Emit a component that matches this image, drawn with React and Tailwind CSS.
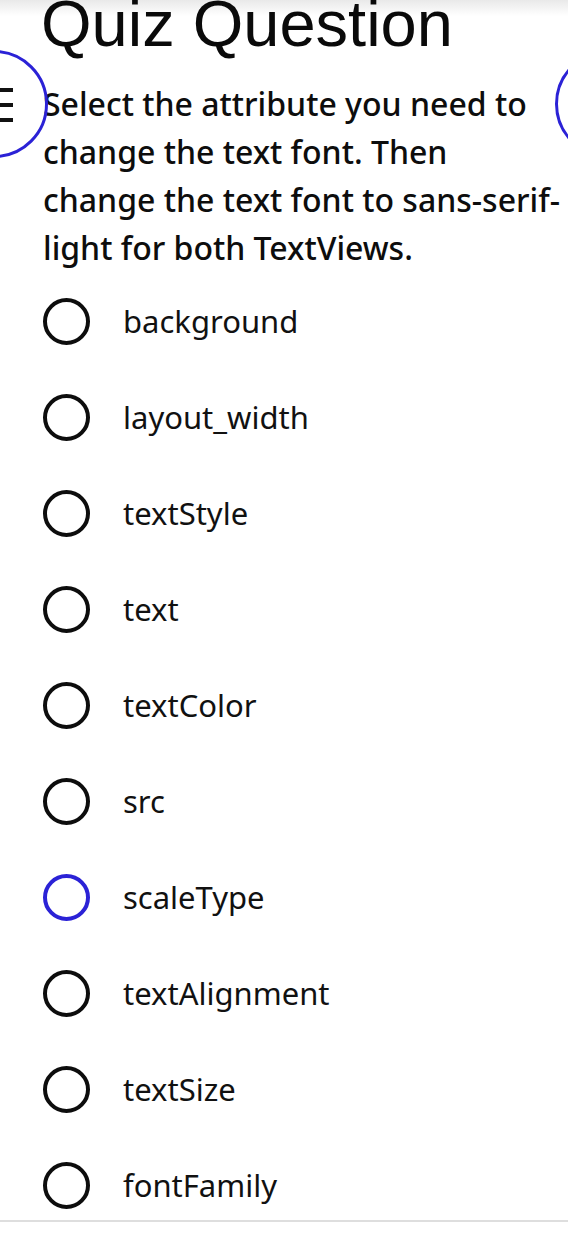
import React from "react";

const options = [
  "background",
  "layout_width",
  "textStyle",
  "text",
  "textColor",
  "src",
  "scaleType",
  "textAlignment",
  "textSize",
  "fontFamily",
];

export default function App() {
  return (
    <div className="relative w-[568px] h-[1236px] overflow-hidden bg-white">
      <div className="absolute left-0 top-0 w-full h-[16px] bg-gradient-to-b from-[#e9e9e9] to-white" />
      <div className="relative flex flex-col">
        <h1
          className="pl-[41px] text-[65px] leading-[62px] text-[#0a0a0a] mt-[-7px]"
          style={{ fontFamily: '"Liberation Sans", Arial, sans-serif' }}
        >
          Quiz Question
        </h1>
        <p
          className="mt-[25px] pl-[43px] pr-[0px] text-[32px] leading-[48px] font-medium text-[#0d0d0d] whitespace-nowrap"
          style={{ fontFamily: '"Noto Sans", sans-serif' }}
        >
          Select the attribute you need to
          <br />
          change the text font. Then
          <br />
          change the text font to sans-serif-
          <br />
          light for both TextViews.
        </p>
        <div className="mt-[1px] flex flex-col">
          {options.map((o) => (
            <div key={o} className="h-[96px] flex items-center pl-[43px]">
              <span
                className={
                  "w-[47px] h-[47px] rounded-full border-[4px] " +
                  (o === "scaleType" ? "border-[#2b22d6]" : "border-[#0d0d0d]")
                }
              />
              <span
                className="ml-[33px] text-[31px] text-[#111] leading-none"
                style={{ fontFamily: '"Noto Sans", sans-serif' }}
              >
                {o}
              </span>
            </div>
          ))}
        </div>
        <div className="mt-[-13px] h-[2px] bg-[#dedede] w-full" />
      </div>
      <button className="absolute left-[-60px] top-[50px] w-[108px] h-[108px] rounded-full border-[3px] border-[#2b22d6] bg-transparent">
        <span className="absolute left-[46px] top-[35px] flex flex-col gap-[11px]">
          <span className="block w-[24px] h-[4px] bg-[#111]" />
          <span className="block w-[24px] h-[4px] bg-[#111]" />
          <span className="block w-[24px] h-[4px] bg-[#111]" />
        </span>
      </button>
      <button className="absolute left-[555px] top-[50px] w-[108px] h-[108px] rounded-full border-[3px] border-[#2b22d6] bg-transparent" />
    </div>
  );
}
